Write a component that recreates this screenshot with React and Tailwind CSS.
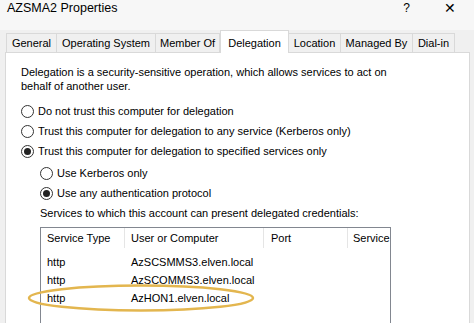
import React from 'react';

const tabs = [
  { label: 'General', w: 'w-[51px]' },
  { label: 'Operating System', w: 'w-[100px]' },
  { label: 'Member Of', w: 'w-[65px]' },
  { label: 'Delegation', w: 'w-[69px]', active: true },
  { label: 'Location', w: 'w-[53px]' },
  { label: 'Managed By', w: 'w-[73px]' },
  { label: 'Dial-in', w: 'w-[43px]' },
];

const Radio = ({ checked, label }) => (
  <div className="flex items-center h-[20px]">
    <span className="w-[13px] h-[13px] rounded-full border border-[#333] bg-white flex items-center justify-center shrink-0">
      {checked && <span className="w-[7px] h-[7px] rounded-full bg-[#222]" />}
    </span>
    <span className="ml-[4px]">{label}</span>
  </div>
);

const rows = [
  ['http', 'AzSCSMMS3.elven.local'],
  ['http', 'AzSCOMMS3.elven.local'],
  ['http', 'AzHON1.elven.local'],
];

export default function App() {
  return (
    <div className="w-[474px] h-[323px] bg-[#f0f0f0] overflow-hidden flex flex-col text-[11px] text-black font-['Liberation_Sans',sans-serif] relative">
      {/* title bar */}
      <div className="h-[30px] shrink-0 flex items-start pl-[7px] bg-[#f7f7f7]">
        <span className="text-[12.5px] leading-[17px]">AZSMA2 Properties</span>
        <span className="ml-auto mr-[34px] text-[12px] leading-[17px]">?</span>
        <span className="mr-[18px] text-[14px] leading-[17px] font-light">✕</span>
      </div>

      {/* tabs */}
      <div className="flex shrink-0 items-end pl-[6px] h-[23px] relative z-10 -mb-[1px]">
        {tabs.map((t) =>
          t.active ? (
            <div
              key={t.label}
              className={`${t.w} h-[23px] bg-white border border-b-0 border-[#d9d9d9] flex items-start justify-center pt-[4px]`}
            >
              {t.label}
            </div>
          ) : (
            <div
              key={t.label}
              className={`${t.w} h-[20px] bg-[#f0f0f0] border border-[#d9d9d9] -ml-[1px] first:ml-0 flex items-center justify-center`}
            >
              {t.label}
            </div>
          )
        )}
      </div>

      {/* panel */}
      <div className="ml-[5px] w-[465px] flex-1 min-h-0 overflow-hidden bg-white border border-[#d9d9d9] border-b-0 pl-[15px] pt-[12px] flex flex-col">
        <p className="leading-[14px] w-[380px]">
          Delegation is a security-sensitive operation, which allows services to act on behalf of another user.
        </p>
        <div className="mt-[8px] flex flex-col">
          <Radio label="Do not trust this computer for delegation" />
          <Radio label="Trust this computer for delegation to any service (Kerberos only)" />
          <Radio checked label="Trust this computer for delegation to specified services only" />
        </div>
        <div className="pl-[19px] mt-[2px] flex flex-col flex-1">
          <Radio label="Use Kerberos only" />
          <Radio checked label="Use any authentication protocol" />
          <div className="h-[20px] flex items-center">
            Services to which this account can present delegated credentials:
          </div>

          {/* list view */}
          <div className="mt-[4px] w-[351px] flex-1 border border-[#828790] border-b-0 bg-white">
            <div className="flex h-[20px] items-center">
              <div className="w-[84px] h-full border-r border-[#e5e5e5] pl-[6px] flex items-center">Service Type</div>
              <div className="w-[139px] h-full border-r border-[#e5e5e5] pl-[6px] flex items-center">User or Computer</div>
              <div className="w-[84px] h-full border-r border-[#e5e5e5] pl-[7px] flex items-center">Port</div>
              <div className="flex-1 h-full pl-[5px] flex items-center overflow-hidden whitespace-nowrap">Service</div>
            </div>
            <div className="mt-[5px] flex flex-col">
              {rows.map(([a, b], i) => (
                <div key={i} className="flex h-[18px] items-center">
                  <div className="w-[84px] pl-[6px]">{a}</div>
                  <div className="pl-[6px]">{b}</div>
                </div>
              ))}
            </div>
          </div>
        </div>
      </div>

      {/* highlight ellipse drawn over the list */}
      <svg className="absolute left-[26px] top-[283px]" width="230" height="32" viewBox="0 0 230 32">
        <ellipse cx="115" cy="15" rx="112" ry="12.5" fill="none" stroke="#e3b64f" strokeWidth="2.5" />
      </svg>
    </div>
  );
}
